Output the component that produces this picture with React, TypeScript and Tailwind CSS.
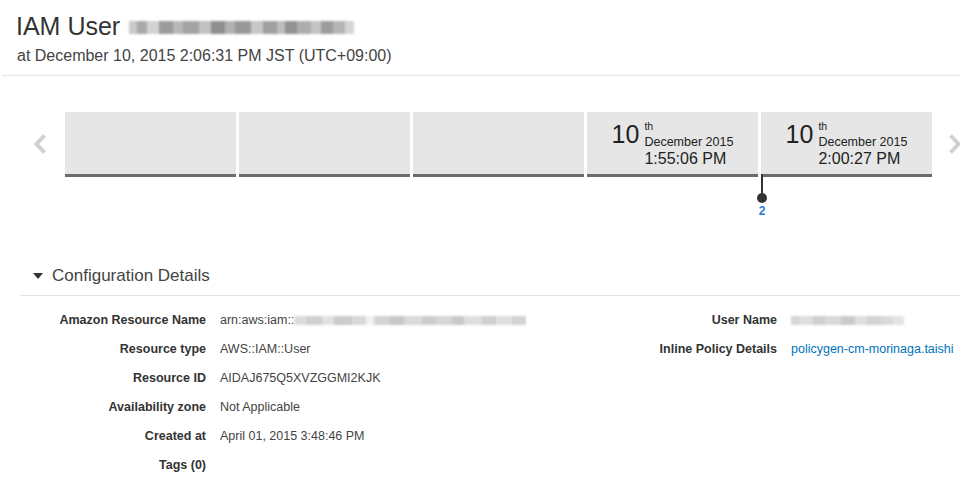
import { ReactNode } from 'react'

type Slot = { day?: string; month?: string; time?: string; marker?: string }

const slots: Slot[] = [
  {},
  {},
  {},
  { day: '10', month: 'December 2015', time: '1:55:06 PM' },
  { day: '10', month: 'December 2015', time: '2:00:27 PM', marker: '2' },
]

// grey mosaic blocks standing in for the redacted values
function Redacted({ cells, h, className = '' }: { cells: [number, string][]; h: string; className?: string }) {
  return (
    <span className={`inline-flex items-center align-middle blur-[1px] ${className}`}>
      {cells.map(([w, c], i) => (
        <span key={i} className={`${h} block`} style={{ width: w, background: c }} />
      ))}
    </span>
  )
}

function Chevron({ dir }: { dir: 'left' | 'right' }) {
  return (
    <svg width="14" height="20" viewBox="0 0 14 20" fill="none">
      <path
        d={dir === 'left' ? 'M11.5 1.5 L3.5 10 L11.5 18.5' : 'M2.5 1.5 L10.5 10 L2.5 18.5'}
        stroke="#d0d0d0"
        strokeWidth="4"
      />
    </svg>
  )
}

function TimeSlot({ slot }: { slot: Slot }) {
  return (
    <div className="relative shrink-0 w-[171px] h-[65px] bg-[#e6e6e6] border-b-[3px] border-[#6b6b6b] flex justify-center pt-[7px] text-[#222]">
      {slot.day && (
        <div className="flex items-start">
          <div className="text-[25px] leading-[25px] mt-[3px] mr-[5px]">{slot.day}</div>
          <div className="flex flex-col">
            <div className="text-[10.5px] leading-[12px] mt-[1px]">th</div>
            <div className="text-[12.5px] leading-[14px] mt-[3px]">{slot.month}</div>
            <div className="text-[16px] leading-[18px] mt-[1px]">{slot.time}</div>
          </div>
        </div>
      )}
      {slot.marker && (
        <div className="absolute left-[-5px] top-[62px] flex flex-col items-center w-[12px]">
          <div className="w-[2px] h-[19px] bg-[#333]" />
          <div className="w-[10px] h-[10px] rounded-full bg-[#333]" />
          <div className="text-[12px] leading-[14px] mt-[1px] text-[#2a7dd1] font-semibold">{slot.marker}</div>
        </div>
      )}
    </div>
  )
}

function Row({ label, children, labelWidth }: { label: string; children?: ReactNode; labelWidth: string }) {
  return (
    <div className="flex items-center h-[29px] text-[12.5px] whitespace-nowrap">
      <div className={`${labelWidth} text-right font-bold text-[#333] shrink-0`}>{label}</div>
      <div className="pl-[14px] text-[#444]">{children}</div>
    </div>
  )
}

export default function App() {
  return (
    <div className="w-[960px] h-[491px] overflow-hidden bg-white text-[#444] font-['Liberation_Sans',Arial,sans-serif]">
      {/* Page title */}
      <div className="px-4 pt-[11px] pb-[10px] border-b border-[#e6e6e6] ml-[2px]">
        <div className="flex items-center text-[25px] leading-[30px] text-[#333]">
          <span className="ml-[-2px]">IAM User</span>
          <Redacted
            className="ml-[9px] mt-[3px]"
            h="h-[13px]"
            cells={[
              [8, '#c9c9c9'], [10, '#a9a9a9'], [12, '#d2d2d2'], [14, '#9b9b9b'], [10, '#b7b7b7'],
              [16, '#a3a3a3'], [12, '#c2c2c2'], [14, '#8f8f8f'], [10, '#b1b1b1'], [16, '#999999'],
              [12, '#c7c7c7'], [14, '#a0a0a0'], [8, '#bcbcbc'], [12, '#929292'], [14, '#adadad'],
              [10, '#c4c4c4'], [12, '#9d9d9d'], [12, '#b5b5b5'], [9, '#d5d5d5'],
            ]}
          />
        </div>
        <div className="text-[16px] leading-[18px] mt-[6px] text-[#444] ml-[-1px]">
          at December 10, 2015 2:06:31 PM JST (UTC+09:00)
        </div>
      </div>

      {/* Timeline */}
      <div className="flex items-center mt-[36px]">
        <div className="w-[65px] shrink-0 flex justify-start pl-[33px] pb-[2px]">
          <Chevron dir="left" />
        </div>
        <div className="flex gap-[3px] shrink-0">
          {slots.map((s, i) => (
            <TimeSlot key={i} slot={s} />
          ))}
        </div>
        <div className="pl-[16px] pb-[2px] shrink-0">
          <Chevron dir="right" />
        </div>
      </div>

      {/* Configuration details */}
      <div className="mt-[89px] pl-[20px]">
        <div className="flex items-center gap-[9px] pl-[13px] pb-[9px] border-b border-[#e2e2e2]">
          <svg width="10" height="6" viewBox="0 0 10 6">
            <path d="M0 0 L10 0 L5 6 Z" fill="#333" />
          </svg>
          <span className="text-[17px] leading-[20px] text-[#444]">Configuration Details</span>
        </div>

        <div className="flex pt-[10px]">
          <div className="w-[540px] shrink-0">
            <Row label="Amazon Resource Name" labelWidth="w-[186px]">
              <span className="inline-flex items-center">
                arn:aws:iam::
                <Redacted
                  h="h-[9px]"
                  cells={[
                    [12, '#dcdcdc'], [16, '#cfcfcf'], [12, '#e2e2e2'], [18, '#cbcbcb'], [14, '#d8d8d8'],
                    [8, '#f2f2f2'], [16, '#d4d4d4'], [14, '#c8c8c8'], [18, '#dadada'], [14, '#cdcdcd'],
                    [16, '#d6d6d6'], [12, '#c9c9c9'], [18, '#dedede'], [14, '#d0d0d0'], [16, '#e0e0e0'],
                    [14, '#d3d3d3'],
                  ]}
                />
              </span>
            </Row>
            <Row label="Resource type" labelWidth="w-[186px]">AWS::IAM::User</Row>
            <Row label="Resource ID" labelWidth="w-[186px]">AIDAJ675Q5XVZGGMI2KJK</Row>
            <Row label="Availability zone" labelWidth="w-[186px]">Not Applicable</Row>
            <Row label="Created at" labelWidth="w-[186px]">April 01, 2015 3:48:46 PM</Row>
            <Row label="Tags (0)" labelWidth="w-[186px]" />
          </div>
          <div className="flex-1 min-w-0">
            <Row label="User Name" labelWidth="w-[217px]">
              <Redacted
                h="h-[9px]"
                cells={[
                  [8, '#d6d6d6'], [14, '#dedede'], [12, '#cfcfcf'], [16, '#d9d9d9'], [14, '#cbcbcb'],
                  [12, '#e0e0e0'], [14, '#d2d2d2'], [12, '#dadada'], [11, '#e4e4e4'],
                ]}
              />
            </Row>
            <Row label="Inline Policy Details" labelWidth="w-[217px]">
              <span className="text-[#0073bb]">policygen-cm-morinaga.taishi</span>
            </Row>
          </div>
        </div>
      </div>
    </div>
  )
}
